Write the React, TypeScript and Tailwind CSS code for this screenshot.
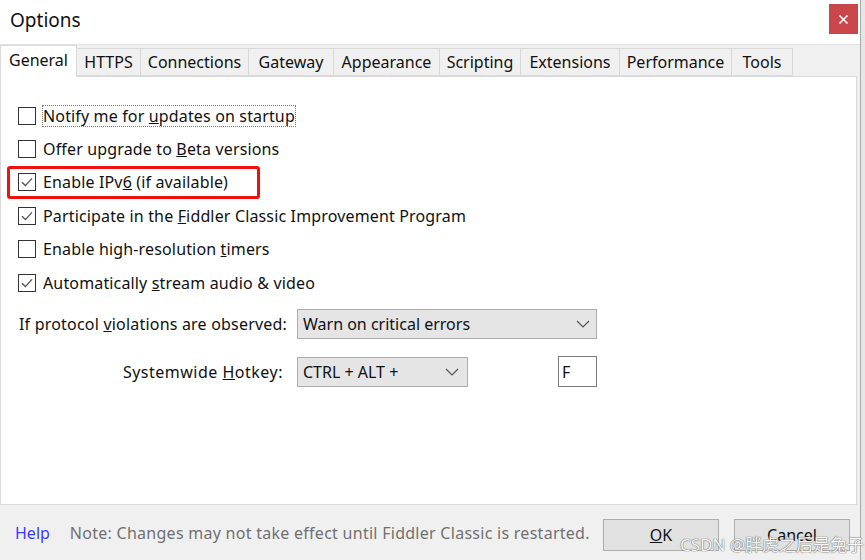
import React from "react";

const font = { fontFamily: '"Noto Sans", "Open Sans", sans-serif' };

function Box({ checked }: { checked?: boolean }) {
  return (
    <div className="w-[18px] h-[18px] border border-[#333] bg-white flex items-center justify-center shrink-0">
      {checked && (
        <svg width="14" height="14" viewBox="0 0 14 14">
          <path d="M2 7.2 L5.4 10.6 L12 3.4" fill="none" stroke="#555" strokeWidth="1.4" />
        </svg>
      )}
    </div>
  );
}

function Row({ checked, children, focus, highlight }: { checked?: boolean; children: React.ReactNode; focus?: boolean; highlight?: boolean }) {
  return (
    <div className="relative h-[33.4px] flex items-center pl-[17px]">
      {highlight && (
        <div className="absolute left-[6px] top-[0px] w-[253px] h-[33px] border-[3px] border-[#f01010] rounded-[3px]" />
      )}
      <Box checked={checked} />
      <span
        className={
          "ml-[7px] text-[16px] text-[#111] leading-[20px] tracking-[0.15px] " +
          (focus ? "outline outline-1 outline-dotted outline-[#777] outline-offset-0" : "")
        }
      >
        {children}
      </span>
    </div>
  );
}

function Chevron() {
  return (
    <svg width="14" height="8" viewBox="0 0 14 8">
      <path d="M1 1 L7 7 L13 1" fill="none" stroke="#555" strokeWidth="1.2" />
    </svg>
  );
}

export default function App() {
  const tabs = [
    { label: "HTTPS", w: 64 },
    { label: "Connections", w: 108 },
    { label: "Gateway", w: 85 },
    { label: "Appearance", w: 106 },
    { label: "Scripting", w: 81 },
    { label: "Extensions", w: 99 },
    { label: "Performance", w: 112 },
    { label: "Tools", w: 61 },
  ];
  return (
    <div className="w-[865px] h-[560px] flex bg-white overflow-hidden relative" style={font}>
      <div className="w-[860px] h-full flex flex-col">
        {/* title bar */}
        <div className="h-[44px] bg-white flex items-center justify-between shrink-0">
          <span className="ml-[10px] text-[19px] text-[#111] mt-[-3px]">Options</span>
          <div className="w-[29px] h-[30px] bg-[#c9464a] mr-[2px] mt-[-6px] flex items-center justify-center">
            <svg width="11" height="11" viewBox="0 0 11 11">
              <path d="M1.5 1.5 L9.5 9.5 M9.5 1.5 L1.5 9.5" stroke="#fff" strokeWidth="1.6" />
            </svg>
          </div>
        </div>
        {/* body */}
        <div className="flex-1 flex flex-col bg-[#f0f0f0] border-t border-[#e3e3e3]">
          <div className="h-[31px] flex items-end shrink-0 relative z-10">
            <div className="w-[77px] h-[32px] bg-white border border-b-0 border-[#d9d9d9] flex items-center justify-center text-[16px] text-[#111] mb-[-1px] pb-[3px]">
              General
            </div>
            {tabs.map((t) => (
              <div
                key={t.label}
                style={{ width: t.w }}
                className="h-[28px] bg-[#f0f0f0] border border-l-0 border-[#d9d9d9] flex items-center justify-center text-[16px] text-[#111]"
              >
                {t.label}
              </div>
            ))}
          </div>
          <div className="h-[429px] bg-white border border-[#d9d9d9] mr-[3px] shrink-0 pt-[22px]">
            <Row focus>
              Notify me for <u>u</u>pdates on startup
            </Row>
            <Row>
              Offer upgrade to <u>B</u>eta versions
            </Row>
            <Row checked highlight>
              Enable IPv<u>6</u> (if available)
            </Row>
            <Row checked>
              Participate in the <u>F</u>iddler Classic Improvement Program
            </Row>
            <Row>
              Enable high-resolution <u>t</u>imers
            </Row>
            <Row checked>
              Automatically <u>s</u>tream audio &amp; video
            </Row>
            <div className="flex items-center mt-[10px] h-[30px]">
              <span className="ml-[18px] text-[16px] text-[#111] w-[278px] tracking-[0.2px]">
                If protocol <u>v</u>iolations are observed:
              </span>
              <div className="w-[300px] h-[30px] bg-[#e5e5e5] border border-[#adadad] flex items-center justify-between pl-[5px] pr-[6px] text-[16px] text-[#111]">
                <span>Warn on critical errors</span>
                <Chevron />
              </div>
            </div>
            <div className="flex items-center mt-[17px] h-[31px]">
              <span className="w-[286px] pr-[4px] text-right text-[16px] text-[#111] tracking-[0.5px]">
                Systemwide <u>H</u>otkey:
              </span>
              <div className="ml-[10px] w-[171px] h-[30px] bg-[#e5e5e5] border border-[#adadad] flex items-center justify-between pl-[5px] pr-[8px] text-[16px] text-[#111]">
                <span>CTRL + ALT +</span>
                <Chevron />
              </div>
              <div className="ml-[90px] w-[39px] h-[31px] bg-white border border-[#7a7a7a] flex items-center pl-[3px] text-[16px] text-[#111]">
                F
              </div>
            </div>
          </div>
          {/* bottom bar */}
          <div className="flex-1 flex items-center relative">
            <span className="ml-[15px] text-[16px] text-[#3b3bff]">Help</span>
            <span className="ml-[20px] text-[16px] text-[#707070] tracking-[0.27px]">
              Note: Changes may not take effect until Fiddler Classic is restarted.
            </span>
            <div className="absolute left-[603px] top-[14px] w-[116px] h-[32px] bg-[#e1e1e1] border border-[#adadad] flex items-center justify-center text-[16px] text-[#111]">
              <span>
                <u>O</u>K
              </span>
            </div>
            <div className="absolute left-[734px] top-[14px] w-[116px] h-[32px] bg-[#e1e1e1] border border-[#adadad] flex items-center justify-center text-[16px] text-[#111]">
              Cancel
            </div>
          </div>
        </div>
      </div>
      <div className="w-[5px] h-full bg-[#e6e6e6] border-l border-[#a9a9a9]" />
      <div
        className="absolute left-[680px] top-[533px] whitespace-nowrap text-[17px] leading-[24px] text-[#f6f6f6] [text-shadow:0_0_1px_#666,0_0_1px_#666]"
        style={{ fontFamily: '"Noto Sans", "Noto Sans CJK SC", sans-serif' }}
      >
        CSDN @胖虎之后是兔子
      </div>
    </div>
  );
}
